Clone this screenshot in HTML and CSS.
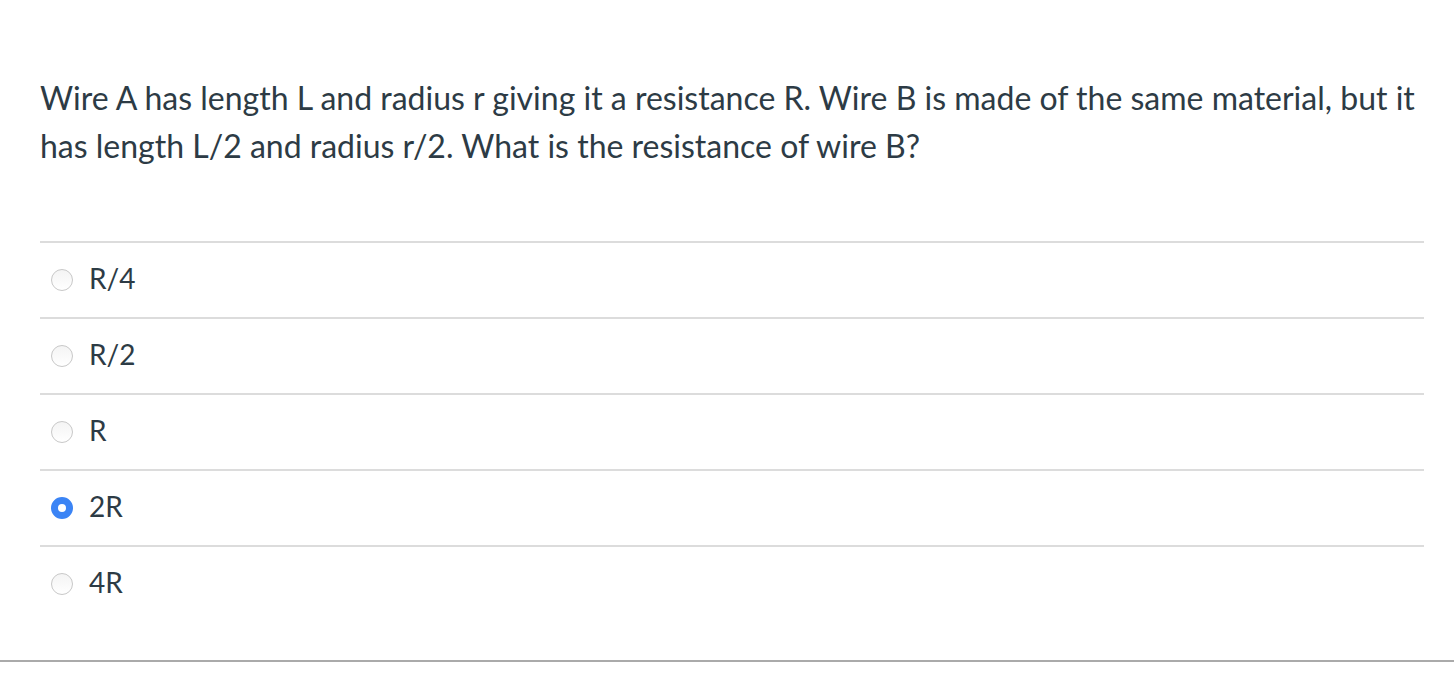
FILE: index.html
```html
<!DOCTYPE html>
<html>
<head>
<meta charset="utf-8">
<link rel="stylesheet" href="styles.css">
</head>
<body>
<div class="quiz">
  <div class="question">Wire A has length L and radius r giving it a resistance R. Wire B is made of the same material, but it has length L/2 and radius r/2. What is the resistance of wire B?</div>
  <div class="answers">
    <label class="answer"><span class="radio"></span><span class="label">R/4</span></label>
    <label class="answer"><span class="radio"></span><span class="label">R/2</span></label>
    <label class="answer"><span class="radio"></span><span class="label">R</span></label>
    <label class="answer"><span class="radio checked"></span><span class="label">2R</span></label>
    <label class="answer"><span class="radio"></span><span class="label">4R</span></label>
  </div>
</div>
<div class="bottom"></div>
</body>
</html>
```
FILE: styles.css
```css
html, body { margin: 0; padding: 0; background: #fff; }
body { font-family: Lato, "Noto Sans", sans-serif; color: #2d3b45; }
.quiz { padding: 74px 30px 0 40px; height: 586px; box-sizing: border-box; }
.question { font-size: 32px; line-height: 48px; letter-spacing: 0; }
.answers { margin-top: 71px; }
.answer { display: flex; align-items: center; height: 74px; border-top: 2px solid #dcdcdc; font-size: 28px; }
.radio { width: 20px; height: 20px; border-radius: 50%; border: 1px solid #c8c8c8; background: linear-gradient(#f4f4f4, #fff); margin: 0 16px 0 11px; box-sizing: content-box; }
.radio.checked { border: 7px solid #3b84f5; width: 8px; height: 8px; background: #fff; }
.label { line-height: 1; position: relative; top: -2px; }
.bottom { height: 2px; background: #aaa; margin-top: 74px; }
```
